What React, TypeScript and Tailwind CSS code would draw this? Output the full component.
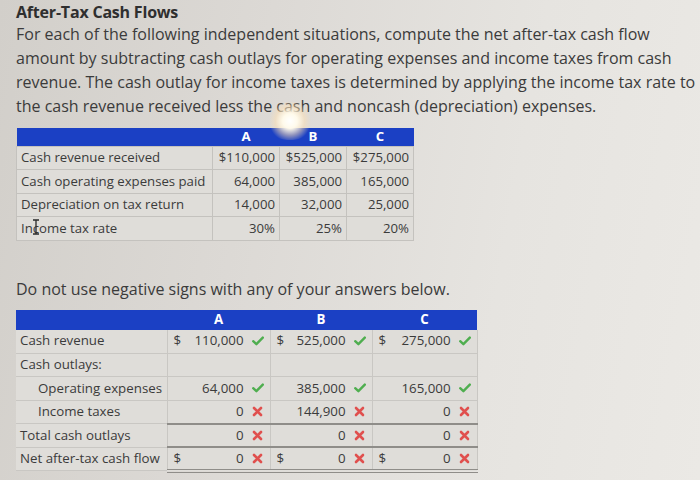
const topRows = [
  { label: 'Cash revenue received', a: '$110,000', b: '$525,000', c: '$275,000' },
  { label: 'Cash operating expenses paid', a: '64,000', b: '385,000', c: '165,000' },
  { label: 'Depreciation on tax return', a: '14,000', b: '32,000', c: '25,000' },
  { label: 'Income tax rate', a: '30%', b: '25%', c: '20%' },
]

const introLines = [
  'For each of the following independent situations, compute the net after-tax cash flow',
  'amount by subtracting cash outlays for operating expenses and income taxes from cash',
  'revenue. The cash outlay for income taxes is determined by applying the income tax rate to',
  'the cash revenue received less the cash and noncash (depreciation) expenses.',
]

type Mark = 'ok' | 'bad' | null
type Cell = { v: string; dollar?: boolean; mark: Mark }
type Row = { label: string; indent?: boolean; cells: (Cell | null)[]; kind?: 'sub' | 'total' | 'net' }

const answerRows: Row[] = [
  {
    label: 'Cash revenue',
    cells: [
      { v: '110,000', dollar: true, mark: 'ok' },
      { v: '525,000', dollar: true, mark: 'ok' },
      { v: '275,000', dollar: true, mark: 'ok' },
    ],
  },
  { label: 'Cash outlays:', cells: [null, null, null] },
  {
    label: 'Operating expenses',
    indent: true,
    cells: [
      { v: '64,000', mark: 'ok' },
      { v: '385,000', mark: 'ok' },
      { v: '165,000', mark: 'ok' },
    ],
  },
  {
    label: 'Income taxes',
    indent: true,
    kind: 'sub',
    cells: [
      { v: '0', mark: 'bad' },
      { v: '144,900', mark: 'bad' },
      { v: '0', mark: 'bad' },
    ],
  },
  {
    label: 'Total cash outlays',
    kind: 'total',
    cells: [
      { v: '0', mark: 'bad' },
      { v: '0', mark: 'bad' },
      { v: '0', mark: 'bad' },
    ],
  },
  {
    label: 'Net after-tax cash flow',
    kind: 'net',
    cells: [
      { v: '0', dollar: true, mark: 'bad' },
      { v: '0', dollar: true, mark: 'bad' },
      { v: '0', dollar: true, mark: 'bad' },
    ],
  },
]

function Check() {
  return (
    <svg width="12" height="10" viewBox="0 0 12 10" className="shrink-0">
      <path d="M1.2 5.2 L4.4 8.2 L10.8 1.6" fill="none" stroke="#4fae4f" strokeWidth="2.4" strokeLinecap="round" strokeLinejoin="round" />
    </svg>
  )
}

function Cross() {
  return (
    <svg width="11" height="11" viewBox="0 0 11 11" className="shrink-0">
      <path d="M2 2 L9 9 M9 2 L2 9" fill="none" stroke="#e0504e" strokeWidth="2.6" strokeLinecap="round" />
    </svg>
  )
}

function AnswerCell({ cell, kind }: { cell: Cell | null; kind?: Row['kind'] }) {
  const border =
    kind === 'sub' || kind === 'total'
      ? 'border-b-2 border-b-[#8f8d89]'
      : kind === 'net'
        ? 'border-b-[4px] border-double border-b-[#8f8d89]'
        : 'border-b border-b-[#c9c7c3]'
  return (
    <td className={`h-[23.5px] border-r border-[#c9c7c3] px-1.5 ${border}`}>
      {cell ? (
        <div className="flex items-center">
          <span className="w-3 text-left">{cell.dollar ? '$' : ''}</span>
          <span className="flex-1 pr-2 text-right">{cell.v}</span>
          <span className="flex w-3 justify-center">{cell.mark === 'ok' ? <Check /> : <Cross />}</span>
        </div>
      ) : null}
    </td>
  )
}

export default function App() {
  return (
    <div
      className="relative h-[480px] w-[700px] overflow-hidden bg-[linear-gradient(100deg,#d2cfca_0%,#dcd9d5_35%,#e6e4e0_70%,#ebe9e5_100%)] pl-4 pt-[2px] text-[#3b3b3b]"
      style={{ fontFamily: '"Open Sans", "Noto Sans", sans-serif' }}
    >
      {/* screen glare */}
      <div className="pointer-events-none absolute left-[268px] top-[102px] h-[38px] w-[44px] rounded-full bg-[radial-gradient(circle,rgba(255,255,255,1)_0%,rgba(255,250,235,1)_25%,rgba(255,225,180,0.5)_50%,transparent_72%)]" />
      {/* text cursor */}
      <svg className="pointer-events-none absolute left-[32px] top-[219px]" width="8" height="16" viewBox="0 0 8 16">
        <path d="M1 1 H7 M4 1 V15 M1 15 H7" fill="none" stroke="#2a2a2a" strokeWidth="1.3" />
      </svg>

      <h1 className="text-[16px] font-bold leading-[20px] tracking-[-0.2px] text-[#2f2f2f]">After-Tax Cash Flows</h1>
      <div className="text-[16px] leading-[24px]">
        {introLines.map((l) => (
          <p key={l} className="whitespace-nowrap">
            {l}
          </p>
        ))}
      </div>

      <table className="mt-[10px] w-[397px] table-fixed border-collapse text-[13.2px] leading-none">
        <colgroup>
          <col className="w-[196px]" />
          <col className="w-[67px]" />
          <col className="w-[67px]" />
          <col className="w-[67px]" />
        </colgroup>
        <thead>
          <tr className="h-[18px] bg-[#1b40c4] text-white">
            <th />
            <th className="text-center font-bold">A</th>
            <th className="text-center font-bold">B</th>
            <th className="text-center font-bold">C</th>
          </tr>
        </thead>
        <tbody>
          {topRows.map((r) => (
            <tr key={r.label} className="h-[23.5px] bg-[#dfddd9]">
              <td className="whitespace-nowrap border border-[#c4c2be] px-1 text-left">{r.label}</td>
              <td className="whitespace-nowrap border border-[#c4c2be] px-1 text-right">{r.a}</td>
              <td className="whitespace-nowrap border border-[#c4c2be] px-1 text-right">{r.b}</td>
              <td className="whitespace-nowrap border border-[#c4c2be] px-1 text-right">{r.c}</td>
            </tr>
          ))}
        </tbody>
      </table>

      <p className="mt-[36px] text-[16px] leading-[24px]">Do not use negative signs with any of your answers below.</p>

      <table className="mt-[9px] w-[461px] table-fixed border-collapse text-[13.3px] leading-none">
        <colgroup>
          <col className="w-[151px]" />
          <col className="w-[103px]" />
          <col className="w-[102px]" />
          <col className="w-[105px]" />
        </colgroup>
        <thead>
          <tr className="h-[20px] bg-[#1b40c4] text-white">
            <th />
            <th className="text-center font-bold">A</th>
            <th className="text-center font-bold">B</th>
            <th className="text-center font-bold">C</th>
          </tr>
        </thead>
        <tbody>
          {answerRows.map((r) => (
            <tr key={r.label} className="bg-[#dfddd9]">
              <td
                className={`h-[23.5px] whitespace-nowrap border-b border-r border-[#c9c7c3] text-left ${r.indent ? 'pl-[22px]' : 'pl-1'}`}
              >
                {r.label}
              </td>
              {r.cells.map((c, i) => (
                <AnswerCell key={i} cell={c} kind={r.kind} />
              ))}
            </tr>
          ))}
        </tbody>
      </table>
    </div>
  )
}
